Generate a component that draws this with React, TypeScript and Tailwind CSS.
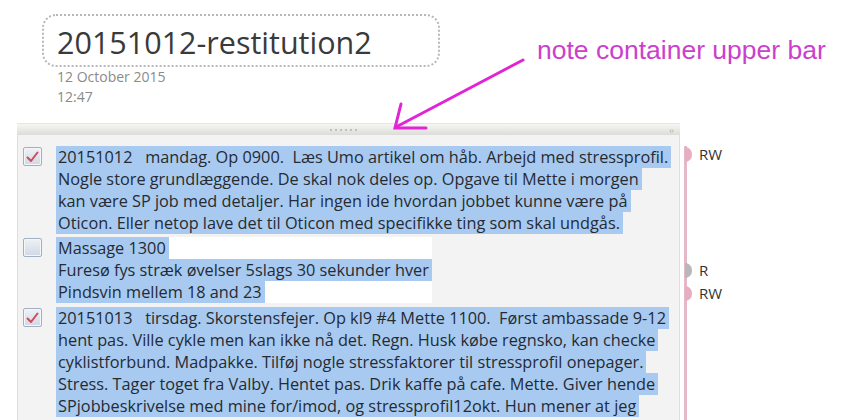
import React from "react";

const HL = "bg-[#a8caf0]";

function CheckBox({ checked }: { checked: boolean }) {
  return (
    <div className="w-[19px] h-[19px] rounded-[2px] border border-[#a3afc0] bg-gradient-to-b from-[#eef2f7] to-[#cfd8e4] flex items-center justify-center shadow-[inset_0_0_0_1px_#f4f6fa]">
      {checked && (
        <svg width="13" height="12" viewBox="0 0 13 12">
          <path d="M1.5 6.5 L5 10 L11.5 1.5" fill="none" stroke="#cf4a5a" strokeWidth="2" strokeLinecap="round" strokeLinejoin="round" />
        </svg>
      )}
    </div>
  );
}

function Line({ text }: { text: string }) {
  return (
    <div className="h-[22px] leading-[22px] whitespace-pre">
      <span className={`inline-block h-[22px] pl-[2px] pr-[3px] ${HL}`}>{text}</span>
    </div>
  );
}

function Para({ checked, lines, boxed }: { checked?: boolean; lines: string[]; boxed?: boolean }) {
  return (
    <div className="flex">
      <div className="w-[38px] pl-[5px] pt-[1px] shrink-0">
        {checked !== undefined && <CheckBox checked={checked} />}
      </div>
      {boxed ? (
        <div className="inline-flex flex-col items-stretch bg-white self-start">
          {lines.map((l, i) => (
            <div key={i} className="h-[22px] leading-[22px] whitespace-pre">
              <span className={`inline-block h-[22px] pl-[2px] pr-[3px] ${HL}`}>{l}</span>
            </div>
          ))}
        </div>
      ) : (
        <div className="flex flex-col">
          {lines.map((l, i) => (
            <Line key={i} text={l} />
          ))}
        </div>
      )}
    </div>
  );
}

function Marker({ color, label }: { color: string; label: string }) {
  return (
    <div className="flex items-center h-[16px]">
      <div className={`w-[7px] h-[15px] rounded-r-full -ml-[2px] ${color}`} />
      <span className="ml-[7px] text-[15px] text-[#333] leading-[16px]">{label}</span>
    </div>
  );
}

export default function App() {
  return (
    <div className="relative w-[858px] h-[420px] overflow-hidden bg-white" style={{ fontFamily: '"Open Sans", "Noto Sans", sans-serif' }}>
      <div className="pl-[42px] pt-[14px]">
        <div className="w-[398px] h-[53px] border-2 border-dotted border-[#b8b8b8] rounded-[14px] pl-[13px] pt-[3px] flex items-center">
          <span className="text-[30.5px] text-[#3a3a3a] leading-none">20151012-restitution2</span>
        </div>
        <div className="pl-[15px] text-[14px] text-[#8a8a8a] leading-[20px]">
          <div>12 October 2015</div>
          <div>12:47</div>
        </div>
      </div>

      <div className="flex mt-[16px]">
        <div className="ml-[17px] w-[663px] h-[300px] flex flex-col">
          <div className="h-[12px] bg-gradient-to-b from-[#f6f6f4] to-[#dcdcd8] border-t border-[#e6e6e4] flex items-center relative">
            <div className="ml-[313px] flex gap-[3px]">
              {[0, 1, 2, 3, 4, 5].map((i) => (
                <div key={i} className="w-[2px] h-[2px] rounded-full bg-[#b0b0b0]" />
              ))}
            </div>
            <span className="ml-auto mr-[6px] text-[8px] leading-none text-[#a0a0a0]">‹›</span>
          </div>
          <div className="flex-1 bg-[#f3f3f3] border-l border-r border-[#dedede] pt-[11px] flex flex-col text-[16.3px] text-[#252a33]">
            <Para
              checked
              lines={[
                "20151012   mandag. Op 0900.  Læs Umo artikel om håb. Arbejd med stressprofil.",
                "Nogle store grundlæggende. De skal nok deles op. Opgave til Mette i morgen",
                "kan være SP job med detaljer. Har ingen ide hvordan jobbet kunne være på",
                "Oticon. Eller netop lave det til Oticon med specifikke ting som skal undgås.",
              ]}
            />
            <div className="h-[3px]" />
            <Para
              checked={false}
              boxed
              lines={["Massage 1300", "Furesø fys stræk øvelser 5slags 30 sekunder hver", "Pindsvin mellem 18 and 23"]}
            />
            <div className="h-[4px]" />
            <Para
              checked
              lines={[
                "20151013   tirsdag. Skorstensfejer. Op kl9 #4 Mette 1100.  Først ambassade 9-12",
                "hent pas. Ville cykle men kan ikke nå det. Regn. Husk købe regnsko, kan checke",
                "cyklistforbund. Madpakke. Tilføj nogle stressfaktorer til stressprofil onepager.",
                "Stress. Tager toget fra Valby. Hentet pas. Drik kaffe på cafe. Mette. Giver hende",
                "SPjobbeskrivelse med mine for/imod, og stressprofil12okt. Hun mener at jeg",
              ]}
            />
          </div>
        </div>
        <div className="ml-[4px] mt-[23px] h-[280px] border-l-[3px] border-[#e4b9c7] flex flex-col">
          <Marker color="bg-[#e8aebf]" label="RW" />
          <div className="h-[100px]" />
          <Marker color="bg-[#b8b8bc]" label="R" />
          <div className="h-[7px]" />
          <Marker color="bg-[#e8aebf]" label="RW" />
        </div>
      </div>

      <div
        className="absolute left-[537px] top-[34px] text-[26.5px] leading-[32px] text-[#cc3fcc] whitespace-nowrap"
        style={{ fontFamily: '"Liberation Sans", Arial, sans-serif' }}
      >
        note container upper bar
      </div>
      <svg className="absolute left-0 top-0 pointer-events-none" width="858" height="420">
        <g stroke="#e024d6" strokeWidth="3" strokeLinecap="round" fill="none">
          <path d="M523 60 L396 127" />
          <path d="M401 104 L395 128 L426 128" />
        </g>
      </svg>
    </div>
  );
}
